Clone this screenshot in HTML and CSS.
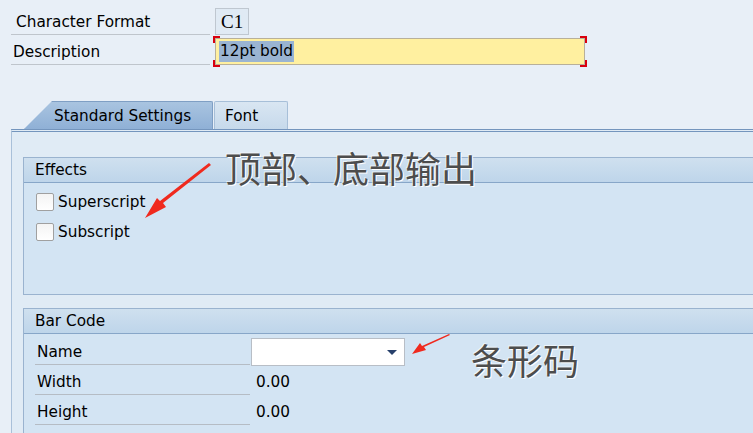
FILE: index.html
```html
<!DOCTYPE html>
<html lang="en">
<head>
    <meta charset="UTF-8">
    <title>Character Format</title>
    <link rel="stylesheet" href="styles.css">
</head>
<body>
    <div class="header-form">
        <div class="row">
            <div class="label">Character Format</div>
            <div class="key-box">C1</div>
        </div>
        <div class="row">
            <div class="label">Description</div>
            <div class="input-req">
                <span class="sel">12pt bold</span>
                <i class="c tl"></i><i class="c bl"></i><i class="c tr"></i><i class="c br"></i>
            </div>
        </div>
    </div>

    <div class="tabs">
        <div class="tab active">Standard Settings</div>
        <div class="tab">Font</div>
    </div>

    <div class="panel">
        <div class="group effects">
            <div class="group-title">Effects</div>
            <div class="group-body">
                <label class="check"><span class="box"></span>Superscript</label>
                <label class="check"><span class="box"></span>Subscript</label>
            </div>
        </div>

        <div class="group barcode">
            <div class="group-title">Bar Code</div>
            <div class="group-body">
                <div class="field">
                    <div class="flabel">Name</div>
                    <div class="dropdown"><span class="tri"></span></div>
                </div>
                <div class="field">
                    <div class="flabel">Width</div>
                    <div class="fval">0.00</div>
                </div>
                <div class="field">
                    <div class="flabel">Height</div>
                    <div class="fval">0.00</div>
                </div>
            </div>
        </div>
    </div>

    <!-- annotations drawn over the screenshot -->
    <div class="note note-top">顶部、底部输出</div>
    <div class="note note-bar">条形码</div>
    <svg class="arrow arrow-1" width="80" height="60" viewBox="0 0 80 60">
        <path d="M68 2 L20 40 L23 44 L2 55 L14 35 L17 38 L66 0 Z" fill="#f02a1e"/>
    </svg>
    <svg class="arrow arrow-2" width="40" height="24" viewBox="0 0 40 24">
        <path d="M38 1 L12 13 L14 16 L0 20 L8 9 L10 12 L37 0 Z" fill="#f02a1e"/>
    </svg>
</body>
</html>
```

FILE: styles.css
```css
body, html {
    margin: 0;
    padding: 0;
    width: 100%;
    height: 100%;
    overflow: hidden;
    font-family: 'DejaVu Sans', Tahoma, sans-serif;
    font-size: 15.3px;
    color: #000;
    background-color: #e8eff7;
}
body {
    position: relative;
}

/* top form */
.header-form {
    padding: 7px 0 0 11px;
}
.row {
    display: flex;
    align-items: flex-end;
    height: 28px;
    margin-bottom: 2px;
}
.label {
    width: 199px;
    height: 27px;
    line-height: 28px;
    padding-left: 5px;
    box-sizing: border-box;
    border-bottom: 1px solid #bfc5cc;
    margin-right: 5px;
}
.row:last-child .label {
    padding-left: 2px;
}
.key-box {
    width: 34px;
    height: 27px;
    box-sizing: border-box;
    border: 1px solid #bfc7d0;
    background: #e0eaf4;
    font-family: 'Liberation Serif', serif;
    font-size: 19px;
    line-height: 25px;
    padding-left: 5px;
}
.input-req {
    position: relative;
    width: 370px;
    height: 27px;
    box-sizing: border-box;
    border: 1px solid #b8b09a;
    background: #fff0a0;
    padding: 2px 3px;
}
.sel {
    display: inline-block;
    background: #9ab4d2;
    line-height: 21px;
    padding: 0 1px;
}
.c {
    position: absolute;
    width: 5px;
    height: 5px;
    border-color: #d9000e;
    border-style: solid;
    border-width: 0;
}
.tl { left: -3px; top: -3px; border-left-width: 2px; border-top-width: 2px; }
.bl { left: -3px; bottom: -3px; border-left-width: 2px; border-bottom-width: 2px; }
.tr { right: -3px; top: -3px; border-right-width: 2px; border-top-width: 2px; }
.br { right: -3px; bottom: -3px; border-right-width: 2px; border-bottom-width: 2px; }

/* tabs */
.tabs {
    display: flex;
    align-items: flex-end;
    margin: 35px 0 0 24px;
    height: 29px;
}
.tab {
    height: 28px;
    line-height: 28px;
    box-sizing: border-box;
    padding: 0 10px;
    border: 1px solid #a7bfd8;
    border-bottom: none;
    border-radius: 2px 2px 0 0;
    background: linear-gradient(#d9e6f2, #c6d9eb);
}
.tab.active {
    width: 189px;
    padding-left: 29px;
    background: linear-gradient(#a9c4e0, #8fb0d6);
    border-color: #7f9fc4;
    clip-path: polygon(28px 0, 100% 0, 100% 100%, 0 100%);
}
.tab + .tab {
    margin-left: 1px;
    width: 74px;
}

/* panel */
.panel {
    margin-left: 11px;
    height: 277px;
    overflow: hidden;
    background: #e0ebf5;
    border-top: 3px double #7495bd;
    border-left: 1px solid #a9c0d9;
    padding: 25px 0 0 11px;
}
.group {
    border: 1px solid #9ab3cf;
    border-right: none;
    background: #d3e4f3;
    margin-bottom: 13px;
}
.group-title {
    height: 24px;
    line-height: 24px;
    padding-left: 11px;
    border-bottom: 1px solid #87a6c8;
    background: linear-gradient(#cfe0ef, #bed5ea);
}
.effects .group-body {
    height: 111px;
    padding: 9px 0 0 12px;
    box-sizing: border-box;
}
.check {
    display: flex;
    align-items: center;
    height: 20px;
    margin-bottom: 10px;
}
.box {
    width: 16px;
    height: 16px;
    border: 1px solid #a0a0a0;
    border-radius: 2px;
    background: linear-gradient(#f4f4f4, #ffffff);
    margin-right: 4px;
}
.barcode .group-body {
    padding: 1px 0 0 11px;
    height: 120px;
}
.field {
    display: flex;
    align-items: flex-end;
    height: 30px;
}
.flabel {
    width: 215px;
    height: 26px;
    line-height: 26px;
    padding-left: 2px;
    box-sizing: border-box;
    border-bottom: 1px solid #b5bcc4;
    margin-right: 1px;
}
.dropdown {
    position: relative;
    width: 154px;
    height: 28px;
    box-sizing: border-box;
    border: 1px solid #b8bec6;
    background: #fff;
    margin-bottom: -1px;
}
.tri {
    position: absolute;
    right: 7px;
    top: 11px;
    width: 0;
    height: 0;
    border-left: 5px solid transparent;
    border-right: 5px solid transparent;
    border-top: 5px solid #27406b;
}
.fval {
    height: 26px;
    line-height: 26px;
    padding-left: 5px;
}

/* annotations */
.note {
    position: absolute;
    font-family: 'Noto Sans CJK SC', sans-serif;
    font-size: 36px;
    line-height: 1;
    color: #4d4d4d;
    text-shadow: 1px 1px 0 #fff, -1px -1px 0 rgba(255, 255, 255, 0.6);
}
.note-top {
    left: 225px;
    top: 149px;
}
.note-bar {
    left: 471px;
    top: 341px;
}
.arrow {
    position: absolute;
}
.arrow-1 {
    left: 143px;
    top: 163px;
}
.arrow-2 {
    left: 412px;
    top: 334px;
}
```
